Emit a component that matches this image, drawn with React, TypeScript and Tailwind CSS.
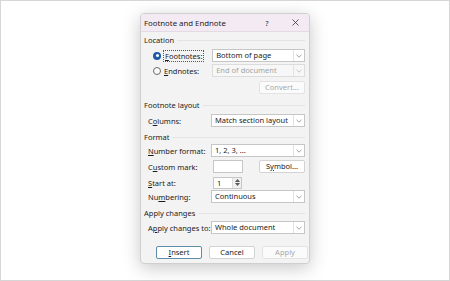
import React from 'react';

const font = { fontFamily: '"Noto Sans", "Open Sans", sans-serif' };

function U({ children }: { children: React.ReactNode }) {
  return <span className="underline underline-offset-[1px]">{children}</span>;
}

function Chevron({ disabled }: { disabled?: boolean }) {
  return (
    <div className="flex h-full w-[11px] items-center justify-center border-l border-[#e2e2e2]">
      <svg width="6" height="4" viewBox="0 0 6 4">
        <path d="M0.5 0.8 L3 3.2 L5.5 0.8" fill="none" stroke={disabled ? '#b8b8b8' : '#8a8a8a'} strokeWidth="0.8" />
      </svg>
    </div>
  );
}

function Select({ value, disabled }: { value: string; disabled?: boolean }) {
  return (
    <div
      className={`flex h-[13px] w-[94px] items-center border ${
        disabled ? 'border-[#dcdcdc] bg-[#f7f7f7] text-[#a3a3a3]' : 'border-[#c6c6c6] bg-white text-[#1b1b1b]'
      }`}
    >
      <span className="flex-1 whitespace-nowrap pl-[3px] leading-[11px]">{value}</span>
      <Chevron disabled={disabled} />
    </div>
  );
}

function Button({ children, kind = 'normal', className = '' }: { children: React.ReactNode; kind?: 'normal' | 'default' | 'disabled'; className?: string }) {
  const look =
    kind === 'default'
      ? 'border-[#5f8ea8] bg-white text-[#1b1b1b]'
      : kind === 'disabled'
      ? 'border-[#e3e3e3] bg-[#fbfbfb] text-[#a8a8a8]'
      : 'border-[#d3d3d3] bg-white text-[#1b1b1b]';
  return (
    <div className={`flex h-[13px] w-[46px] items-center justify-center rounded-[2px] border leading-[11px] ${look} ${className}`}>
      {children}
    </div>
  );
}

function Heading({ children, className = '' }: { children: React.ReactNode; className?: string }) {
  return (
    <div className={`flex h-[12px] items-center gap-[3px] pl-[3px] pr-[4px] ${className}`}>
      <span className="leading-[12px]">{children}</span>
      <div className="h-px flex-1 bg-[#e4e4e4]" />
    </div>
  );
}

function Row({ label, children, className = '' }: { label: React.ReactNode; children: React.ReactNode; className?: string }) {
  return (
    <div className={`flex h-[13px] items-center pl-[7px] pr-[4px] ${className}`}>
      <span className="w-[65px] whitespace-nowrap leading-[12px]">{label}</span>
      <div className="flex flex-1 items-center justify-between">{children}</div>
    </div>
  );
}

function Radio({ checked }: { checked?: boolean }) {
  return checked ? (
    <div className="flex h-[8px] w-[8px] items-center justify-center rounded-full bg-[#1d5aa8]">
      <div className="h-[3px] w-[3px] rounded-full bg-white" />
    </div>
  ) : (
    <div className="h-[8px] w-[8px] rounded-full border border-[#6b6b6b] bg-[#fafafa]" />
  );
}

export default function App() {
  return (
    <div className="h-[281px] w-[450px] border border-[#d6d6d6] bg-white pl-[139px] pt-[12px] text-[7.5px] text-[#1b1b1b]" style={font}>
      <div className="flex h-[251px] w-[170px] flex-col overflow-hidden rounded-[4px] border border-[#cfcfcf] bg-[#f3f3f3] shadow-[0_4px_18px_rgba(0,0,0,0.22)]">
        <div className="flex h-[18px] shrink-0 items-center border-b border-[#e2dce2] bg-[#f4eaf4] pl-[3px]">
          <span className="flex-1 text-[7.8px] leading-[12px]">Footnote and Endnote</span>
          <span className="w-[10px] text-center leading-[12px]">?</span>
          <svg width="7" height="7" viewBox="0 0 7 7" className="ml-[20px] mr-[10px]">
            <path d="M0.5 0.5 L6.5 6.5 M6.5 0.5 L0.5 6.5" stroke="#333" strokeWidth="0.8" />
          </svg>
        </div>

        <Heading className="mt-[2px]">Location</Heading>

        <div className="mt-[3px] flex h-[13px] items-center pl-[12px] pr-[4px]">
          <div className="flex w-[60px] items-center gap-[2px]">
            <Radio checked />
            <span className="border border-dotted border-[#555] px-px leading-[10px]">
              <U>F</U>ootnotes:
            </span>
          </div>
          <Select value="Bottom of page" />
        </div>

        <div className="mt-[2px] flex h-[13px] items-center pl-[12px] pr-[4px]">
          <div className="flex w-[60px] items-center gap-[3px]">
            <Radio />
            <span className="leading-[12px]">
              <U>E</U>ndnotes:
            </span>
          </div>
          <Select value="End of document" disabled />
        </div>

        <div className="mt-[4px] flex justify-end pr-[4px]">
          <Button kind="disabled" className="h-[12px]">Convert...</Button>
        </div>

        <Heading className="mt-[5px]">Footnote layout</Heading>

        <Row label={<>C<U>o</U>lumns:</>} className="mt-[3px]">
          <Select value="Match section layout" />
        </Row>

        <Heading className="mt-[4px]">Format</Heading>

        <Row label={<><U>N</U>umber format:</>} className="mt-[1px]">
          <Select value="1, 2, 3, ..." />
        </Row>

        <Row label={<>C<U>u</U>stom mark:</>} className="mt-[3px]">
          <div className="h-[13px] w-[30px] border border-[#c6c6c6] bg-white" />
          <Button>
            S<U>y</U>mbol...
          </Button>
        </Row>

        <Row label={<><U>S</U>tart at:</>} className="mt-[3px]">
          <div className="flex h-[12px] w-[29px] items-center border border-[#c6c6c6] bg-white">
            <span className="flex-1 pl-[3px] leading-[10px]">1</span>
            <div className="flex h-full w-[9px] flex-col items-center justify-center gap-[1px] border-l border-[#dcdcdc] bg-[#f0f0f0]">
              <svg width="5" height="3" viewBox="0 0 5 3">
                <path d="M0 3 L2.5 0 L5 3 Z" fill="#555" />
              </svg>
              <svg width="5" height="3" viewBox="0 0 5 3">
                <path d="M0 0 L2.5 3 L5 0 Z" fill="#555" />
              </svg>
            </div>
          </div>
        </Row>

        <Row label={<>Nu<U>m</U>bering:</>} className="mt-[1px]">
          <Select value="Continuous" />
        </Row>

        <Heading className="mt-[4px]">Apply changes</Heading>

        <Row label={<>A<U>p</U>ply changes to:</>} className="mt-[2px]">
          <Select value="Whole document" />
        </Row>

        <div className="mt-[12px] flex items-center gap-[7px] pl-[15px]">
          <Button kind="default">
            <U>I</U>nsert
          </Button>
          <Button>Cancel</Button>
          <Button kind="disabled">Apply</Button>
        </div>
      </div>
    </div>
  );
}
